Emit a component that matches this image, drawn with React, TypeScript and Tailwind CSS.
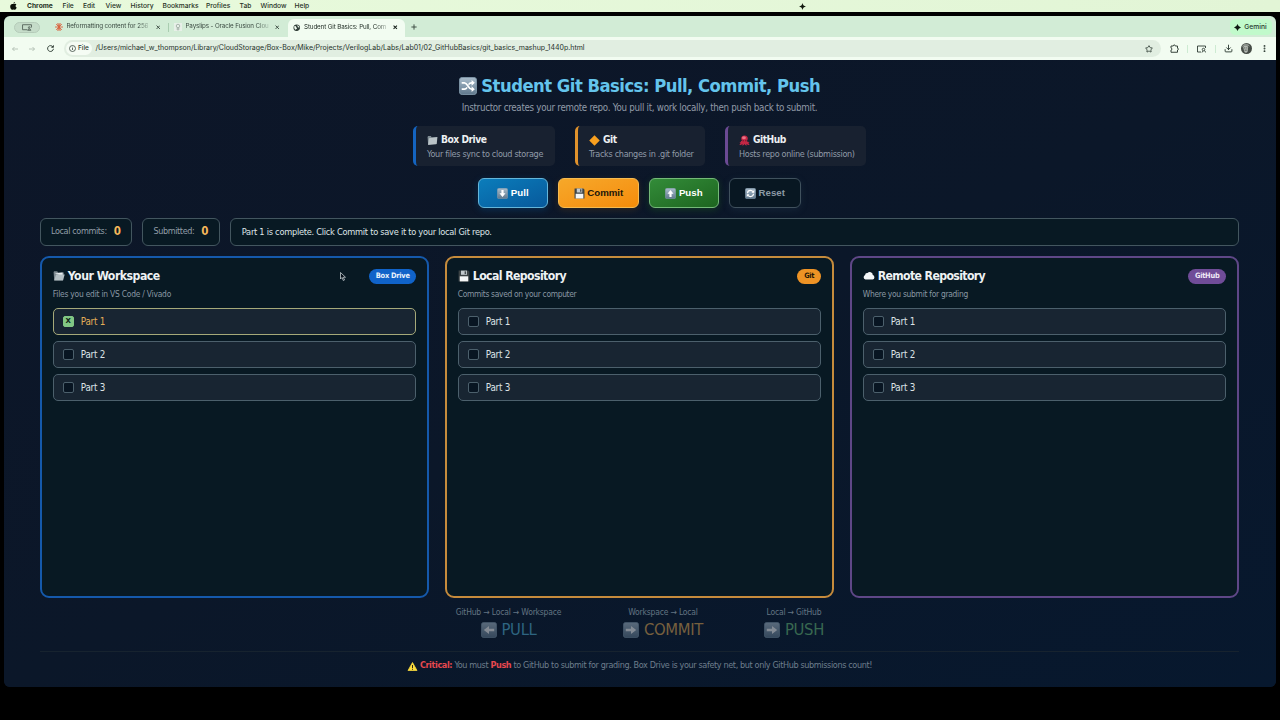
import type { ReactNode } from "react";
import { Download, EllipsisVertical, Star } from "lucide-react";

function Tile({ kind, className = "" }: { kind: "shuffle" | "down" | "up" | "left" | "right" | "reset"; className?: string }) {
  return (
    <svg viewBox="0 0 20 20" className={`shrink-0 ${className}`}>
      <defs>
        <linearGradient id={`tile-${kind}`} x1="0" y1="0" x2="0" y2="1">
          <stop offset="0" stopColor="#a9bccb" />
          <stop offset="1" stopColor="#60788d" />
        </linearGradient>
      </defs>
      <rect x="0.5" y="0.5" width="19" height="19" rx="3" fill={`url(#tile-${kind})`} stroke="#829bad" />
      {kind === "shuffle" && (
        <g fill="none" stroke="#fff" strokeWidth="1.8">
          <path d="M3 6.5h3c4 0 4 7 8 7h1M3 13.500h3c1.500 0 2.400-1 3-2M10.600 8.500c.8-1.200 1.700-2 3.400-2h1" />
          <path d="M14 3.300v6.400l3.600-3.200zM14 10.300v6.400l3.600-3.200z" fill="#fff" stroke="none" />
        </g>
      )}
      {kind === "down" && <path d="M8 3.500h4v6h3.500L10 16.500 4.500 9.500H8z" fill="#fff" />}
      {kind === "up" && <path d="M8 16.500h4v-6h3.500L10 3.500 4.500 10.500H8z" fill="#fff" />}
      {kind === "left" && <path d="M16.500 8.500v3H10V15l-6.500-5L10 5v3.500z" fill="#fff" />}
      {kind === "right" && <path d="M3.500 8.500v3H10V15l6.500-5L10 5v3.500z" fill="#fff" />}
      {kind === "reset" && (
        <g fill="none" stroke="#fff" strokeWidth="2.200">
          <path d="M4.500 9.500c.4-3.300 2.600-5 5.500-5 2.100 0 3.500.8 4.600 2.300M15.500 10.500c-.4 3.300-2.600 5-5.500 5-2.100 0-3.500-.8-4.600-2.300" />
          <path d="M16.800 3.800v5h-5zM3.200 16.200v-5h5z" fill="#fff" stroke="none" />
        </g>
      )}
    </svg>
  );
}

function Folder({ open = false, className = "" }: { open?: boolean; className?: string }) {
  return (
    <svg viewBox="0 0 20 20" className={`shrink-0 ${className}`}>
      <path d="M2 17 1 3.500 2 2h5l1.500 2H18l-1 13z" fill="#7d8a91" />
      {open ? (
        <>
          <path d="m3 6 13-2v6z" fill="#e7ecee" />
          <path d="M2 17.500 5 7.500h14.500L16.500 17.500z" fill="#b4bfc4" />
        </>
      ) : (
        <path d="M2 18 3.500 6 19 3.500 17.500 16.500z" fill="#b9c2c6" />
      )}
    </svg>
  );
}

function Floppy({ className = "" }: { className?: string }) {
  return (
    <svg viewBox="0 0 20 20" className={`shrink-0 ${className}`}>
      <path d="M1 1h16l2 2v16H1z" fill="#3c4345" />
      <path d="M5 1h10v7H5z" fill="#c3cacd" />
      <path d="M11 2.200h2.500v4.600H11z" fill="#454d50" />
      <path d="M3 10.500h14V19H3z" fill="#f4f6f6" />
    </svg>
  );
}

function Octopus({ className = "" }: { className?: string }) {
  return (
    <svg viewBox="0 0 20 20" className={`shrink-0 ${className}`}>
      <path d="M10 1c-4 0-6.500 3-6 6 .3 2 1.500 3 1.300 4.500-.5 1.500-3 .2-4.300 2 .8 1 2 .5 2.500.8C2.500 16 1.500 16 1 17.500c2.500 1.500 4.500-.5 5.500-1.500 0 1.500-.8 2-.5 3 2 .3 3.200-1 4-2.500.8 1.500 2 2.800 4 2.500.3-1-.5-1.500-.5-3 1 1 3 3 5.500 1.500-.5-1.500-1.500-1.500-2.500-3.200.5-.3 1.700.2 2.500-.8-1.300-1.800-3.800-.5-4.300-2-.2-1.500 1-2.500 1.300-4.500C16.500 4 14 1 10 1z" fill="#c42745" />
      <ellipse cx="9" cy="5" rx="3.500" ry="2.800" fill="#ea7386" />
      <circle cx="7.500" cy="10.500" r="1" fill="#380b18" />
      <circle cx="12.500" cy="10.500" r="1" fill="#380b18" />
    </svg>
  );
}

function Concept({ icon, title, text, className }: { icon: ReactNode; title: string; text: string; className: string }) {
  return (
    <div className={`h-10 rounded-[5px] border-l-[3px] bg-[#182130] pt-[7px] pl-[11px] whitespace-nowrap ${className}`}>
      <div className="flex h-[14px] items-center gap-[3px] text-[10.200px] font-bold tracking-[-0.500px] text-[#edf0f2]">
        {icon}
        {title}
      </div>
      <div className="h-[14px] text-[9px] leading-[14px] tracking-[-0.310px] text-[#919ba8]">{text}</div>
    </div>
  );
}

function Action({ icon, label, className }: { icon: ReactNode; label: string; className: string }) {
  return (
    <button className={`flex h-[30px] items-center justify-center gap-[2.500px] rounded-[6px] border pt-px font-['Liberation_Sans',sans-serif] text-[9.700px] font-bold ${className}`}>
      {icon}
      {label}
    </button>
  );
}

function Part({ n, done = false }: { n: number; done?: boolean }) {
  return (
    <li className={`flex h-[27px] items-center rounded-[5px] border bg-[#182532] pl-[9px] ${done ? "border-[#a5a979]" : "border-[#4c606c]"}`}>
      <span className={`flex size-[11px] items-center justify-center rounded-[2px] border font-['DejaVu_Sans',sans-serif] text-[7px] leading-[9px] font-bold ${done ? "border-[#81c784] bg-[#81c784] text-[#0b2414]" : "border-[#4c606c] bg-[#081522]"}`}>
        {done && "X"}
      </span>
      <span className={`ml-[7px] pt-px text-[9.800px] leading-none tracking-[-0.250px] ${done ? "text-[#e2ad58]" : "text-[#dde3e6]"}`}>Part {n}</span>
    </li>
  );
}

function Panel({ icon, title, titleClass, sub, subClass, badge, badgeClass, className, done = 0 }: { icon: ReactNode; title: string; titleClass: string; sub: string; subClass: string; badge: string; badgeClass: string; className: string; done?: number }) {
  return (
    <section className={`h-[342px] rounded-[9px] border-2 bg-[#081923] px-[11px] pt-[10.500px] ${className}`}>
      <div className="flex h-4 items-center">
        {icon}
        <h2 className={`ml-[3px] text-[12.200px] leading-4 font-bold whitespace-nowrap text-[#eef2f3] ${titleClass}`}>{title}</h2>
        <span className={`ml-auto flex h-[15px] items-center justify-center rounded-full text-[7.400px] font-bold tracking-[-0.250px] ${badgeClass}`}>{badge}</span>
      </div>
      <p className={`mt-[3px] h-[14px] text-[8.400px] leading-[14px] text-[#8a98a3] ${subClass}`}>{sub}</p>
      <ul className="mt-[6.500px] flex flex-col gap-[6px]">
        <Part n={1} done={done >= 1} />
        <Part n={2} done={done >= 2} />
        <Part n={3} done={done >= 3} />
      </ul>
    </section>
  );
}

function Flow({ label, name, kind, className, nameClass }: { label: string; name: string; kind: "left" | "right"; className: string; nameClass: string }) {
  return (
    <div className={`flex flex-col items-center whitespace-nowrap ${className}`}>
      <div className="h-[14px] text-[8.500px] leading-[14px] tracking-[-0.190px] text-[#637482]">{label}</div>
      <div className="mt-[1px] flex h-[20px] items-center gap-[5px]">
        <Tile kind={kind} className="size-4 opacity-50" />
        <span className={`text-[16.500px] leading-5 tracking-[-0.350px] ${nameClass}`}>{name}</span>
      </div>
    </div>
  );
}

function Globe({ className = "" }: { className?: string }) {
  return (
    <svg viewBox="0 0 16 16" className={`shrink-0 ${className}`}>
      <circle cx="8" cy="8" r="7" fill="#33403a" />
      <path d="M3 4.500c2-.5 3.500.5 3.500 2s2 1 2 2.500-2 1-2.500 3.500C3 11.500 2 8 3 4.500zM9 2.500c0 2 1 1.500 1 3s2 1.500 3.500 2.500c0-3-2-5-4.500-5.500z" fill="#f2fcf1" />
    </svg>
  );
}

function BrowserChrome() {
  return (
    <div className="font-[Inter,'Liberation_Sans',sans-serif] text-[#28372e]">
      <div className="flex h-[21px] items-center bg-[#d2ecd6] pt-px text-[6.250px] whitespace-nowrap">
        <div className="ml-[10px] flex h-[11px] w-[26px] shrink-0 items-center justify-center rounded-full border border-[#b5cbb9] bg-[#c5dcc9]">
          <svg viewBox="0 0 18 12" className="h-[7px] w-[10px]" fill="none" stroke="#526158" strokeWidth="1.600">
            <path d="M9 10H1V1h16v5" />
            <circle cx="13" cy="6" r="1.500" />
            <path d="M10 11c0-3 6-3 6 0z" />
          </svg>
        </div>
        <svg viewBox="0 0 16 16" className="ml-[15px] size-[8px] shrink-0" stroke="#d9633e" strokeWidth="1.800">
          <path d="M8 0v16M0 8h16M2.300 2.300l11.400 11.400M13.700 2.300 2.300 13.700M5 .8l6 14.400M11 .8 5 15.200" />
        </svg>
        <span className="ml-[4px] w-[86px] bg-linear-to-r from-[#33423a] from-82% to-[#d2ecd6] bg-clip-text tracking-[-0.120px] text-transparent">Reformatting content for 256</span>
        <svg viewBox="0 0 8 8" className="ml-[3px] size-[4.500px]" stroke="#33433a" strokeWidth="1.600"><path d="m1 1 6 6M7 1 1 7" /></svg>
        <span className="ml-[7.500px] h-[9px] w-px bg-[#a9cdb0]" />
        <svg viewBox="0 0 16 16" className="ml-[5px] size-[8px] shrink-0" fill="none" stroke="#96a49b" strokeWidth="1.500">
          <rect width="16" height="16" fill="#e7f0e8" stroke="none" />
          <path d="M8 15V9M5 12h6" /><circle cx="8" cy="6" r="3.500" />
        </svg>
        <span className="ml-[4px] w-[86px] bg-linear-to-r from-[#33423a] from-82% to-[#d2ecd6] bg-clip-text tracking-[-0.120px] text-transparent">Payslips - Oracle Fusion Clou</span>
        <svg viewBox="0 0 8 8" className="ml-[3px] size-[4.500px]" stroke="#33433a" strokeWidth="1.600"><path d="m1 1 6 6M7 1 1 7" /></svg>
        <div className="ml-[8.500px] flex h-[18px] w-[117px] items-center self-end rounded-t-[6px] bg-[#f2fcf1] pb-[1px] pl-[5px]">
          <Globe className="size-[7.500px]" />
          <span className="ml-[4px] w-[86px] bg-linear-to-r from-[#1c2820] from-84% to-[#f2fcf1] bg-clip-text tracking-[-0.120px] text-transparent">Student Git Basics: Pull, Com</span>
          <svg viewBox="0 0 8 8" className="ml-[3px] size-[4.500px]" stroke="#17211b" strokeWidth="1.800"><path d="m1 1 6 6M7 1 1 7" /></svg>
        </div>
        <svg viewBox="0 0 8 8" className="ml-[6.500px] size-[6px]" stroke="#33433a" strokeWidth="1.200"><path d="M4 .5v7M.5 4h7" /></svg>
        <div className="mr-[4px] ml-auto flex h-[16px] w-[42px] items-center justify-center gap-[3px] rounded-[5px] bg-[#c1facb] text-[6.700px] font-medium">
          <svg viewBox="0 0 12 12" className="size-[7px]" fill="#0e1912"><path d="M6 0q1.200 4.800 6 6-4.800 1.200-6 6-1.200-4.800-6-6 4.800-1.200 6-6z" /></svg>
          Gemini
        </div>
      </div>
      <div className="flex h-[23px] items-center bg-[#f2fcf1]">
        <svg viewBox="0 0 12 10" className="ml-[8px] h-[6px] w-[6px]" fill="none" stroke="#a7b4aa" strokeWidth="1.500"><path d="M12 5H1M5 1 1 5l4 4" /></svg>
        <svg viewBox="0 0 12 10" className="ml-[11px] h-[6px] w-[6px]" fill="none" stroke="#a7b4aa" strokeWidth="1.500"><path d="M0 5h11M7 1l4 4-4 4" /></svg>
        <svg viewBox="0 0 12 12" className="ml-[12px] h-[7px] w-[7px]" fill="none" stroke="#2e3c34" strokeWidth="1.600"><path d="M10.300 3.500A5 5 0 1 0 11 6.500M11 .5v3.500H7.500" /></svg>
        <div className="ml-[10px] flex h-[17px] w-[1097px] items-center rounded-full bg-[#e1eee1] pl-[2px]">
          <div className="flex h-[13px] w-[26px] items-center gap-[2.500px] rounded-full bg-[#f5fcf4] pl-[3px] text-[6.400px] font-medium">
            <svg viewBox="0 0 14 14" className="size-[7px]" fill="none" stroke="#2e3c34" strokeWidth="1.500"><circle cx="7" cy="7" r="6" /><path d="M7 6v4M7 3.500v1.500" /></svg>
            File
          </div>
          <span className="ml-[4px] text-[7.030px] whitespace-nowrap text-[#26322b]">/Users/michael_w_thompson/Library/CloudStorage/Box-Box/Mike/Projects/VerilogLab/Labs/Lab01/02_GitHubBasics/git_basics_mashup_1440p.html</span>
          <Star className="mr-[7.500px] ml-auto size-[8px] text-[#2e3c34]" strokeWidth={2.500} />
        </div>
        <svg viewBox="0 0 18 18" className="ml-[9px] size-[9px]" fill="none" stroke="#2e3c34" strokeWidth="1.900"><path d="M2 4h4.500c0-3 4-3 4 0H15v4.500c2.600 0 2.600 3.500 0 3.500v4.500H2V12c2.600 0 2.600-3.800 0-3.800z" strokeLinejoin="round" /></svg>
        <span className="ml-[8px] h-[8px] w-px bg-[#cdebd2]" />
        <svg viewBox="0 0 18 16" className="ml-[9px] h-[8px] w-[9px]" fill="none" stroke="#2e3c34" strokeWidth="1.800"><path d="M8 14H1V2h16v4" /><circle cx="13" cy="9" r="2.500" /><path d="m15 11 2.500 4M10 15l2-3" /></svg>
        <span className="ml-[9px] h-[8px] w-px bg-[#cdebd2]" />
        <Download className="ml-[8px] size-[9px] text-[#2e3c34]" strokeWidth={2.500} />
        <svg viewBox="0 0 20 20" className="ml-[8px] size-[11px]">
          <circle cx="10" cy="10" r="10" fill="#454c46" />
          <path d="M4 8c1-5 8-6 9 0l-1 8c-2 3-5 2-6 0z" fill="#b3b9b2" />
          <path d="M5 9h3M9.500 9h2M6.500 13h4" stroke="#424a43" strokeWidth="1.400" />
          <path d="M2 8c0-8 13-9 14-1-4-3-10-3-14 1z" fill="#8c938c" />
        </svg>
        <EllipsisVertical className="ml-[8px] size-[9px] text-[#2e3c34]" strokeWidth={3} />
      </div>
    </div>
  );
}

export default function App() {
  return (
    <div className="h-[720px] w-[1280px] overflow-hidden bg-black">
      <nav className="relative flex h-[12px] items-center bg-linear-to-r from-[#e8fadc] to-[#e2f5d6] font-[Inter,'Liberation_Sans',sans-serif] text-[6.700px] font-medium whitespace-nowrap text-[#26311f]">
        <svg viewBox="0 0 14 17" className="ml-[10px] h-[8px] w-[7px]" fill="#0c120a"><path d="M10 0c0 2-1.300 3.500-3 3.500C6.800 1.800 8.300.3 10 0zM7 4.500C8 4.500 9 3.800 10.300 3.800c1.200 0 2.200.6 2.900 1.500-2.600 1.600-2.200 5.200.6 6.300C13 13.800 11.600 16.500 10 16.500c-1.100 0-1.500-.7-2.900-.7s-1.800.7-2.900.7C2 16.500 0 12.500 0 9.400 0 6 2 4 4.200 4 5.400 4 6.300 4.500 7 4.500z" /></svg>
        <span className="ml-[10px] w-[35.500px] font-bold">Chrome</span>
        <span className="w-[20.500px]">File</span>
        <span className="w-[22.500px]">Edit</span>
        <span className="w-[25px]">View</span>
        <span className="w-[32px]">History</span>
        <span className="w-[43.500px]">Bookmarks</span>
        <span className="w-[33.500px]">Profiles</span>
        <span className="w-[21px]">Tab</span>
        <span className="w-[34px]">Window</span>
        <span>Help</span>
        <svg viewBox="0 0 12 12" className="absolute top-[2.500px] left-[798.500px] size-[7px]" fill="#10170d"><path d="M6 0q.8 5.200 6 6-5.200.8-6 6-.8-5.200-6-6 5.200-.8 6-6z" /></svg>
      </nav>
      <div className="relative mt-[4px] ml-[3.500px] h-[671px] w-[1272px] overflow-hidden rounded-[6px] bg-[#0b1627]">
        <BrowserChrome />
        <main className="flex h-[627px] flex-col bg-linear-to-br from-[#0d1628] via-[#0b1729] to-[#07182e] px-[36.300px] font-['DejaVu_Sans_Condensed','DejaVu_Sans',sans-serif]">
          <div className="mt-[14px] flex h-6 items-center justify-center gap-[4.500px]">
            <Tile kind="shuffle" className="size-[18px]" />
            <h1 className="text-[18.300px] leading-6 font-bold tracking-[-0.520px] text-[#64c4ec]">Student Git Basics: Pull, Commit, Push</h1>
          </div>
          <p className="h-[19px] text-center text-[9.700px] leading-[19px] tracking-[-0.280px] text-[#919ba8]">Instructor creates your remote repo. You pull it, work locally, then push back to submit.</p>
          <div className="mt-[9px] flex justify-center gap-5">
            <Concept className="w-[142px] border-[#1464c0]" icon={<Folder className="size-[11px]" />} title="Box Drive" text="Your files sync to cloud storage" />
            <Concept
              className="w-[130px] border-[#e0922c]"
              icon={<svg viewBox="0 0 20 20" className="size-[11px]"><path d="m10 .5 9.500 9.500-9.500 9.500L.5 10z" fill="#f9a01f" /></svg>}
              title="Git"
              text="Tracks changes in .git folder"
            />
            <Concept className="w-[141px] border-[#6b4a94]" icon={<Octopus className="size-[11px]" />} title="GitHub" text="Hosts repo online (submission)" />
          </div>
          <div className="mt-[12px] flex justify-center gap-[10px]">
            <Action className="w-[70px] border-[#64b5d9] bg-linear-to-br from-[#0b7dbb] to-[#08599b] text-white shadow-[0_2px_7px_#08599b55]" icon={<Tile kind="down" className="size-[11px]" />} label="Pull" />
            <Action className="w-[81px] border-[#f6bb50] bg-linear-to-br from-[#f6a829] to-[#f58c08] text-[#211609] shadow-[0_2px_7px_#f58c0822]" icon={<Floppy className="size-[11px]" />} label="Commit" />
            <Action className="w-[70px] border-[#74b978] bg-linear-to-br from-[#338c39] to-[#1d651f] text-white shadow-[0_2px_7px_#1d651f66]" icon={<Tile kind="up" className="size-[11px]" />} label="Push" />
            <Action className="w-[72px] border-[#40515d] bg-[#081722] text-[#8b9aa5] shadow-[0_2px_7px_#24405055]" icon={<Tile kind="reset" className="size-[11px]" />} label="Reset" />
          </div>
          <div className="mt-[10px] flex h-[28px] gap-[10px] text-[9px] tracking-[-0.380px] text-[#919da7]">
            <div className="flex w-[92px] items-center justify-center gap-[7px] rounded-[6px] border border-[#43565f] bg-[#081923] whitespace-nowrap">
              Local commits: <b className="text-[11.500px] text-[#f5b75a]">0</b>
            </div>
            <div className="flex w-[78px] items-center justify-center gap-[7px] rounded-[6px] border border-[#43565f] bg-[#081923] whitespace-nowrap">
              Submitted: <b className="text-[11.500px] text-[#f5b75a]">0</b>
            </div>
            <div className="flex flex-1 items-center rounded-[6px] border border-[#43565f] bg-[#081923] pl-[11px] text-[9.200px] tracking-[-0.270px] text-[#dfe5e8]">
              Part 1 is complete. Click Commit to save it to your local Git repo.
            </div>
          </div>
          <div className="mt-[9.500px] grid grid-cols-3 gap-[15.500px]">
            <Panel className="border-[#1559ab]" icon={<Folder open className="size-[12px]" />} title="Your Workspace" titleClass="tracking-[-0.500px]" sub="Files you edit in VS Code / Vivado" subClass="tracking-[-0.220px]" badge="Box Drive" badgeClass="w-[47px] bg-[#1063c9] text-[#e8f2fc]" done={1} />
            <Panel className="border-[#c68b3c]" icon={<Floppy className="size-[12px]" />} title="Local Repository" titleClass="tracking-[-0.600px]" sub="Commits saved on your computer" subClass="tracking-[-0.320px]" badge="Git" badgeClass="w-[24px] bg-[#ee9325] text-[#241707]" />
            <Panel
              className="border-[#5f4787]"
              icon={<svg viewBox="0 0 20 20" className="size-[12px]"><path d="M4 16a4 4 0 0 1-.5-7.500 3.500 3.500 0 0 1 4-3.300 5 5 0 0 1 8.800 3.300A3.900 3.900 0 0 1 16 16z" fill="#f4f7f8" /></svg>}
              title="Remote Repository"
              titleClass="tracking-[-0.640px]"
              sub="Where you submit for grading"
              subClass="tracking-[-0.280px]"
              badge="GitHub"
              badgeClass="w-[38px] bg-[#704c98] text-[#efe8f6]"
            />
          </div>
          <div className="mt-[7.500px] flex justify-center gap-[60px]">
            <Flow className="w-[107px]" label="GitHub → Local → Workspace" name="PULL" kind="left" nameClass="text-[#2e6581]" />
            <Flow className="w-[82px]" label="Workspace → Local" name="COMMIT" kind="right" nameClass="text-[#77603e]" />
            <Flow className="w-[60px]" label="Local → GitHub" name="PUSH" kind="right" nameClass="text-[#386850]" />
          </div>
          <footer className="mt-[10.500px] flex h-[29px] items-center justify-center border-t border-[#17232f] pt-px text-[9px] tracking-[-0.370px] whitespace-pre text-[#6e7e8c]">
            <svg viewBox="0 0 20 18" className="mr-[2px] h-[9px] w-[11px]"><path d="M10 1 19 17H1z" fill="#fbdc3d" stroke="#fbdc3d" strokeWidth="1.500" strokeLinejoin="round" /><path d="M10 6v6M10 13.500v2" stroke="#292313" strokeWidth="2" /></svg>
            <b className="text-[#e5484f]">Critical:</b> You must <b className="text-[#e5484f]">Push</b> to GitHub to submit for grading. Box Drive is your safety net, but only GitHub submissions count!
          </footer>
        </main>
        <svg viewBox="0 0 12 18" className="absolute top-[256px] left-[336px] h-[9px] w-[6px]"><path d="M1 1v13l3-3 2.500 6 2.500-1-2.500-5.500H11z" fill="#07101a" stroke="#cdd5da" strokeWidth="1.500" /></svg>
      </div>
    </div>
  );
}
